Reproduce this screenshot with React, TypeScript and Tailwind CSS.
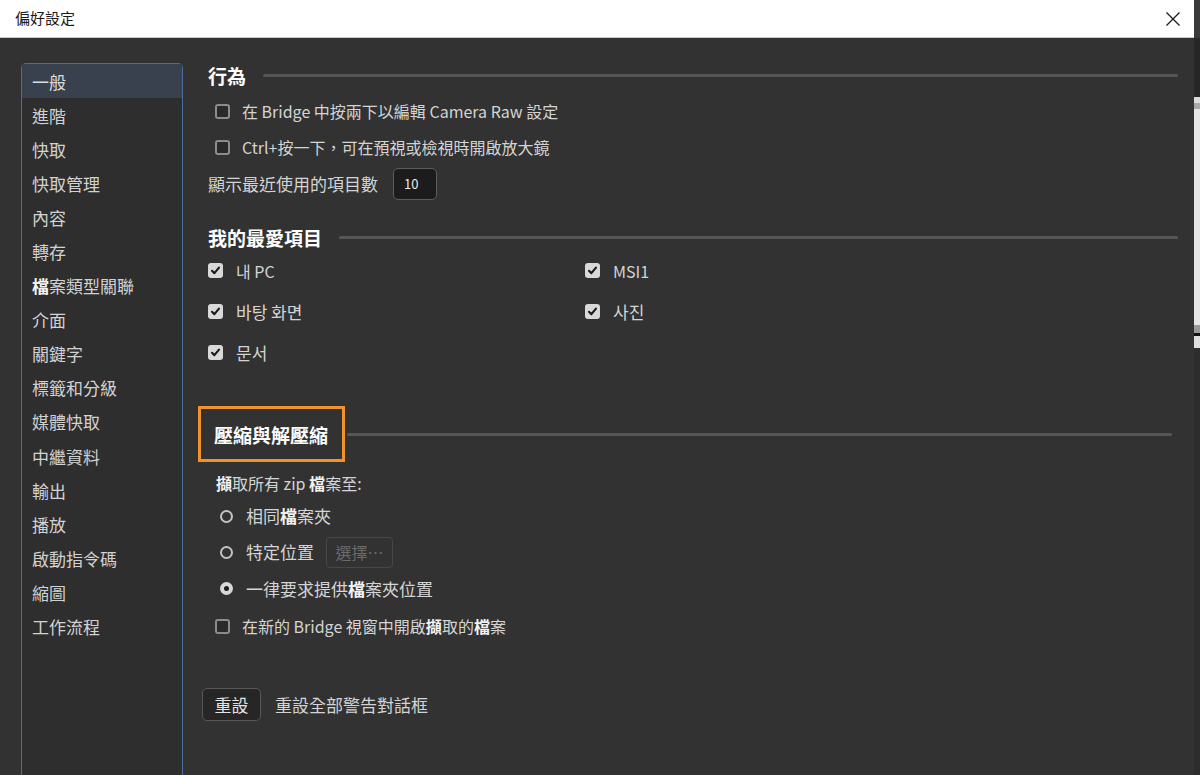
import React from "react";

const FONT = '"Noto Sans CJK TC", "Noto Sans", sans-serif';
const KR = '"Noto Sans CJK KR", "Noto Sans CJK TC", sans-serif';

const sidebarItems = [
  "一般",
  "進階",
  "快取",
  "快取管理",
  "內容",
  "轉存",
  "檔案類型關聯",
  "介面",
  "關鍵字",
  "標籤和分級",
  "媒體快取",
  "中繼資料",
  "輸出",
  "播放",
  "啟動指令碼",
  "縮圖",
  "工作流程",
];

function Bolded({ text }: { text: string }) {
  const parts = text.split(/(檔|擷)/);
  return (
    <>
      {parts.map((p, i) =>
        p === "檔" || p === "擷" ? (
          <span key={i} className="font-bold text-[#f2f2f2]">
            {p}
          </span>
        ) : (
          <span key={i}>{p}</span>
        )
      )}
    </>
  );
}

function Box({ checked }: { checked?: boolean }) {
  if (checked) {
    return (
      <span className="flex h-[15px] w-[15px] shrink-0 items-center justify-center rounded-[3px] bg-[#d9d9d9]">
        <svg width="11" height="11" viewBox="0 0 12 12">
          <path d="M2.2 6.3 L4.8 8.9 L9.8 2.8" fill="none" stroke="#1a1a1a" strokeWidth="2.3" strokeLinecap="round" strokeLinejoin="round" />
        </svg>
      </span>
    );
  }
  return <span className="block h-[15px] w-[15px] shrink-0 rounded-[3px] border-[2.5px] border-[#8c8c8c] bg-[#2a2a2a]" />;
}

function Radio({ checked }: { checked?: boolean }) {
  if (checked) {
    return (
      <span className="flex h-[13px] w-[13px] shrink-0 items-center justify-center rounded-full bg-[#d8d8d8]">
        <span className="block h-[5px] w-[5px] rounded-full bg-[#1c1c1c]" />
      </span>
    );
  }
  return <span className="block h-[13px] w-[13px] shrink-0 rounded-full border-[2.5px] border-[#c4c4c4]" />;
}

function Heading({ title, mr }: { title: string; mr: string }) {
  return (
    <div className="flex h-[26px] items-center">
      <span className="text-[19px] font-bold leading-none text-white">{title}</span>
      <div className={`ml-[17px] h-[3px] flex-1 rounded-full bg-[#565656] ${mr}`} />
    </div>
  );
}

export default function App() {
  return (
    <div className="flex h-[775px] w-[1200px] overflow-hidden bg-[#2f2f2f]" style={{ fontFamily: FONT }}>
      <div className="flex w-[1194px] flex-col">
        {/* title bar */}
        <div className="flex h-[38px] shrink-0 items-center justify-between border-b border-[#c8c8c8] bg-white pl-[15px] pr-[13px]">
          <span className="text-[15px] text-[#1a1a1a]">偏好設定</span>
          <svg width="16" height="16" viewBox="0 0 16 16">
            <path d="M1.5 1.5 L14.5 14.5 M14.5 1.5 L1.5 14.5" stroke="#1a1a1a" strokeWidth="1.3" fill="none" />
          </svg>
        </div>

        {/* body */}
        <div className="flex flex-1 bg-[#323232] text-[#d4d4d4]">
          {/* sidebar */}
          <div className="ml-[21px] mt-[25px] w-[162px] shrink-0 rounded-t-[5px] border-[1.5px] border-b-0 border-[#4b6d96] bg-[#2e2e2e]">
            {sidebarItems.map((it, i) => (
              <div
                key={it}
                className={`flex h-[34.1px] items-center pl-[10px] text-[17px] leading-none ${
                  i === 0 ? "bg-[#38414d] text-[#dcdcdc]" : "text-[#d2d2d2]"
                }`}
              >
                <Bolded text={it} />
              </div>
            ))}
          </div>

          {/* content */}
          <div className="flex flex-1 flex-col pl-[25px] pt-[24px]">
            <Heading title="行為" mr="mr-[16px]" />
            <div className="mt-[5px] flex h-[36px] items-center gap-[12px] pl-[7px] text-[16px]">
              <Box />
              <span>在 Bridge 中按兩下以編輯 Camera Raw 設定</span>
            </div>
            <div className="flex h-[36px] items-center gap-[12px] pl-[7px] text-[16px]">
              <Box />
              <span>Ctrl+按一下，可在預視或檢視時開啟放大鏡</span>
            </div>
            <div className="flex h-[38px] items-center text-[17px]">
              <span>顯示最近使用的項目數</span>
              <div className="ml-[15px] flex h-[32px] w-[44px] items-center rounded-[5px] border border-[#5c5c5c] bg-[#1c1c1c] pl-[10px] text-[13px] text-[#e8e8e8]">
                10
              </div>
            </div>

            <div className="mt-[21px]">
              <Heading title="我的最愛項目" mr="mr-[16px]" />
            </div>
            <div className="grid grid-cols-[377px_1fr] text-[17px]">
              {[
                ["내 PC", true],
                ["MSI1", true],
                ["바탕 화면", true],
                ["사진", true],
                ["문서", true],
              ].map(([label], i) => (
                <div key={i} className="flex h-[41px] items-center gap-[13px]">
                  <Box checked />
                  <span style={{ fontFamily: KR }} className={label === "MSI1" || label === "내 PC" ? "text-[16px]" : ""}>
                    {label as string}
                  </span>
                </div>
              ))}
            </div>

            <div className="-ml-[10px] mt-[33px] flex items-center">
              <div className="flex h-[56px] w-[147px] items-center border-[3px] border-[#f0922e] pl-[13px]">
                <span className="text-[19px] font-bold leading-none text-white">壓縮與解壓縮</span>
              </div>
              <div className="ml-[2px] mr-[22px] h-[3px] flex-1 rounded-full bg-[#565656]" />
            </div>
            <div className="mt-[6px] flex h-[30px] items-center pl-[8px] text-[16px]">
              <span>
                <Bolded text="擷取所有 zip 檔案至:" />
              </span>
            </div>
            <div className="flex h-[36px] items-center gap-[13px] pl-[12px] text-[17px]">
              <Radio />
              <span>
                <Bolded text="相同檔案夾" />
              </span>
            </div>
            <div className="flex h-[36px] items-center pl-[12px] text-[17px]">
              <Radio />
              <span className="ml-[13px]">特定位置</span>
              <div className="ml-[12px] flex h-[31px] w-[67px] items-center justify-center rounded-[4px] border border-[#474747] text-[16px] text-[#6a6a6a]">
                選擇…
              </div>
            </div>
            <div className="flex h-[37px] items-center gap-[13px] pl-[12px] text-[17px]">
              <Radio checked />
              <span>
                <Bolded text="一律要求提供檔案夾位置" />
              </span>
            </div>
            <div className="flex h-[38px] items-center gap-[12px] pl-[7px] text-[16px]">
              <Box />
              <span>
                <Bolded text="在新的 Bridge 視窗中開啟擷取的檔案" />
              </span>
            </div>

            <div className="-ml-[6px] mt-[43px] flex h-[33px] items-center">
              <div className="flex h-[33px] w-[59px] items-center justify-center rounded-[5px] border border-[#585858] bg-[#262626] text-[17px] text-[#e4e4e4]">
                重設
              </div>
              <span className="ml-[14px] text-[17px]">重設全部警告對話框</span>
            </div>
          </div>
        </div>
      </div>

      {/* sliver of background window */}
      <div className="flex w-[6px] flex-col">
        <div className="h-[38px] bg-[#3a3a3a]" />
        <div className="h-[59px] bg-[#262626]" />
        <div className="h-[6px] bg-[#dcdcdc]" />
        <div className="h-[6px] bg-[#a9a9a9]" />
        <div className="h-[216px] bg-[#e6e6e6]" />
        <div className="h-[8px] bg-[#9a9a9a]" />
        <div className="h-[3px] bg-[#111111]" />
        <div className="h-[12px] bg-[#dedede]" />
        <div className="flex-1 bg-[#2d2d2d]" />
      </div>
    </div>
  );
}
